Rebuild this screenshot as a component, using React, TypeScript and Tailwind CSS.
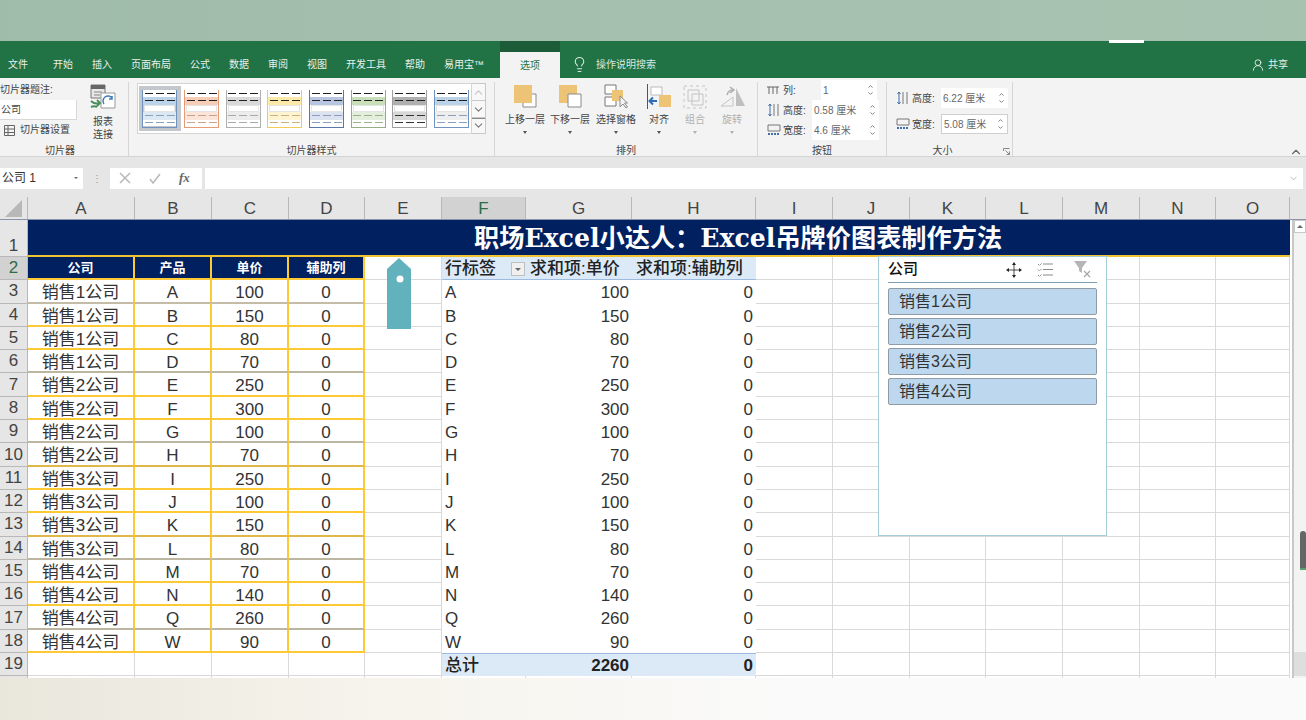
import type { ReactNode } from 'react'
import { ChevronDown, ChevronUp, Lightbulb, UserRound } from 'lucide-react'

const gridCols =
  'grid grid-rows-[minmax(0,1fr)] grid-cols-[28px_107px_77px_77px_76px_77px_84px_106px_124px_77px_77px_76px_77px_77px_76px_74px]'

const tabs = ['开始', '插入', '页面布局', '公式', '数据', '审阅', '视图', '开发工具', '帮助', '易用宝™']
const colNames = ['A', 'B', 'C', 'D', 'E', 'F', 'G', 'H', 'I', 'J', 'K', 'L', 'M', 'N', 'O']

const rows = [
  { no: 3, company: '销售1公司', product: 'A', price: 100, line: 'border-b-[#c4bca6]' },
  { no: 4, company: '销售1公司', product: 'B', price: 150, line: 'border-b-[#fdc935]' },
  { no: 5, company: '销售1公司', product: 'C', price: 80, line: 'border-b-[#fdc935]' },
  { no: 6, company: '销售1公司', product: 'D', price: 70, line: 'border-b-[#bcb5a0]' },
  { no: 7, company: '销售2公司', product: 'E', price: 250, line: 'border-b-[#fdc935]' },
  { no: 8, company: '销售2公司', product: 'F', price: 300, line: 'border-b-[#fdc935]' },
  { no: 9, company: '销售2公司', product: 'G', price: 100, line: 'border-b-[#bcb5a0]' },
  { no: 10, company: '销售2公司', product: 'H', price: 70, line: 'border-b-[#e0b84a]' },
  { no: 11, company: '销售3公司', product: 'I', price: 250, line: 'border-b-[#fdc935]' },
  { no: 12, company: '销售3公司', product: 'J', price: 100, line: 'border-b-[#fdc935]' },
  { no: 13, company: '销售3公司', product: 'K', price: 150, line: 'border-b-[#e0b84a]' },
  { no: 14, company: '销售3公司', product: 'L', price: 80, line: 'border-b-[#bcb5a0]' },
  { no: 15, company: '销售4公司', product: 'M', price: 70, line: 'border-b-[#fdc935]' },
  { no: 16, company: '销售4公司', product: 'N', price: 140, line: 'border-b-[#fdc935]' },
  { no: 17, company: '销售4公司', product: 'Q', price: 260, line: 'border-b-[#bcb5a0]' },
  { no: 18, company: '销售4公司', product: 'W', price: 90, line: 'border-b-[#fdc935]' },
]

const swatches = [
  { edge: 'border-[#6f93bd]', band: 'bg-[#bdd3ea]', soft: 'bg-[#dce8f4]', dash: 'border-[#8aa0b8]' },
  { edge: 'border-[#e59c74]', band: 'bg-[#f6cdb6]', soft: 'bg-[#fbe4d8]', dash: 'border-[#c9a08a]' },
  { edge: 'border-[#b0b0b0]', band: 'bg-[#d9d9d9]', soft: 'bg-[#ececec]', dash: 'border-[#a8a8a8]' },
  { edge: 'border-[#f4cb58]', band: 'bg-[#fde9a8]', soft: 'bg-[#fef4d2]', dash: 'border-[#c8b478]' },
  { edge: 'border-[#5877a8]', band: 'bg-[#b7c5e0]', soft: 'bg-[#dbe2f0]', dash: 'border-[#8b9cbc]' },
  { edge: 'border-[#93ad84]', band: 'bg-[#c8dfba]', soft: 'bg-[#e3efdc]', dash: 'border-[#9cb08e]' },
  { edge: 'border-[#a0a0a0]', band: 'bg-[#b0b0b0]', soft: 'bg-[#d8d8d8]', dash: 'border-[#333333]' },
  { edge: 'border-[#6f93bd]', band: 'bg-[#bcd2e8]', soft: 'bg-[#eeeeee]', dash: 'border-[#8aa0b8]' },
]

function Dashes({ color }: { color: string }) {
  return (
    <div className="flex w-full justify-center gap-[3px]">
      <span className={`w-[8px] border-t ${color}`} />
      <span className={`w-[8px] border-t ${color}`} />
      <span className={`w-[8px] border-t ${color}`} />
    </div>
  )
}

function Swatch({ s, selected }: { s: (typeof swatches)[number]; selected?: boolean }) {
  return (
    <div className={`flex h-[45px] w-[41.7px] shrink-0 items-center justify-center ${selected ? 'bg-[#c4c7cb]' : ''}`}>
      <div className={`flex h-[38px] w-[35px] flex-col border-x border-b ${s.edge}`}>
        <div className="flex h-[7px] items-center bg-white"><Dashes color="border-[#222222]" /></div>
        <div className={`flex h-[8px] items-center ${s.band}`}><Dashes color="border-[#222222]" /></div>
        <div className="mx-[1px] h-[7px] border border-[#e4e4e4] bg-white" />
        <div className={`flex h-[8px] items-center ${s.soft}`}><Dashes color={s.dash} /></div>
        <div className="flex h-[6px] items-center bg-white"><Dashes color={s.dash} /></div>
      </div>
    </div>
  )
}

function Group({ label, width, labelPad = '', children }: { label: string; width: string; labelPad?: string; children: ReactNode }) {
  return (
    <div className={`relative flex h-full shrink-0 flex-col border-r border-[#d6d6d6] ${width}`}>
      <div className="flex min-h-0 flex-1">{children}</div>
      <div className={`-mb-[2px] text-center text-[10px] leading-[14px] text-[#444444] ${labelPad}`}>{label}</div>
    </div>
  )
}

function Spinner({ value, width }: { value: string; width: string }) {
  return (
    <div className={`flex h-[20px] items-center justify-between bg-white pl-[2px] pr-[3px] text-[10px] text-[#666666] ${width}`}>
      <span>{value}</span>
      <span className="flex flex-col text-[#555555]">
        <ChevronUp size={7} strokeWidth={2.5} />
        <ChevronDown size={7} strokeWidth={2.5} />
      </span>
    </div>
  )
}

function HeightIcon() {
  return (
    <svg width="13" height="14" viewBox="0 0 13 14" fill="none">
      <path d="M3 1v12M1.500 3 3 1l1.500 2M1.500 11 3 13l1.500-2" stroke="#3f6fa8" />
      <path d="M7 1v12M11 1v12" stroke="#777777" />
    </svg>
  )
}

function WidthIcon() {
  return (
    <svg width="14" height="13" viewBox="0 0 14 13" fill="none">
      <path d="M1 1h12M1 7h12M1 1v6M13 1v6" stroke="#777777" />
      <path d="M1 10h12" stroke="#3f6fa8" strokeDasharray="2 1" strokeWidth="2" />
    </svg>
  )
}

function Arrange({ label, width, muted, children }: { label: string; width: string; muted?: boolean; children: ReactNode }) {
  return (
    <div className={`flex shrink-0 flex-col items-center ${width}`}>
      <div className="h-[26px]">{children}</div>
      <div className={`mt-[3px] whitespace-nowrap text-[10px] leading-[14px] ${muted ? 'text-[#b0b0b0]' : 'text-[#444444]'}`}>{label}</div>
      <div className={`mt-[4px] h-0 w-0 border-x-[2.500px] border-t-[3px] border-x-transparent ${muted ? 'border-t-[#b0b0b0]' : 'border-t-[#555555]'}`} />
    </div>
  )
}

function Ribbon() {
  return (
    <div className="flex h-[79px] shrink-0 border-b border-[#d4d4d4] bg-[#f3f3f3] pt-[4px] text-[#444444]">
      <Group label="切片器" width="w-[129px]" labelPad="pr-[8px]">
        <div className="w-[88px] pt-[1px]">
          <div className="text-[10px] leading-[14px]">切片器题注:</div>
          <div className="mt-[3px] flex h-[20px] w-[77px] items-center border-b border-r border-[#d8d8d8] bg-white pl-[1px] text-[10px]">公司</div>
          <div className="mt-[3px] flex items-center gap-[5px] pl-[4px] text-[10px] leading-[14px]">
            <svg width="11" height="11" viewBox="0 0 11 11" fill="none" stroke="#666666">
              <path d="M.5.5h10v10H.5zM.5 4h10M.5 7.500h10M4 .5v10" />
            </svg>
            切片器设置
          </div>
        </div>
        <div className="flex w-[30px] flex-col items-center pt-[2px]">
          <svg width="26" height="26" viewBox="0 0 26 26" fill="none">
            <path d="M1 1h14v13H1z" fill="#e8e8e8" stroke="#777777" />
            <path d="M1 1h14v4H1z" fill="#666666" />
            <path d="M4 8h8M4 11h6" stroke="#888888" />
            <path d="M11 9h14v15H11z" fill="#ffffff" stroke="#999999" />
            <path d="M14 20a5 5 0 0 1 8-6M22 12v3h-3" stroke="#3f7cb8" strokeWidth="1.500" />
            <path d="M1 17c3 3 6 3 9 2M7 16l3 3-3 3M1 23c2-1 4-1 6 0" stroke="#4e8f5e" strokeWidth="2" />
          </svg>
          <div className="mt-[5px] text-center text-[10px] leading-[13px]">报表<br />连接</div>
        </div>
      </Group>

      <Group label="切片器样式" width="w-[366px]">
        <div className="flex pl-[8px] pt-[1px]">
          <div className="flex h-[51px] w-[335px] items-center overflow-hidden border border-[#d4d4d4] bg-white pl-[1px]">
            {swatches.map((s, i) => (
              <Swatch key={i} s={s} selected={i === 0} />
            ))}
          </div>
          <div className="flex h-[51px] w-[14px] flex-col border-y border-r border-[#c8c8c8] bg-[#f8f8f8] text-[#777777]">
            <div className="flex h-[17px] items-center justify-center border-b border-[#c8c8c8] text-[#c4c4c4]"><ChevronUp size={13} /></div>
            <div className="flex h-[17px] items-center justify-center border-b border-[#c8c8c8]"><ChevronDown size={13} /></div>
            <div className="flex flex-1 items-start justify-center border-t border-[#888888]"><ChevronDown size={13} /></div>
          </div>
        </div>
      </Group>

      <Group label="排列" width="w-[263px]">
        <div className="flex pl-[8px] pt-[2px]">
          <Arrange label="上移一层" width="w-[44px]">
            <svg width="24" height="26" viewBox="0 0 24 26" fill="none">
              <path d="M10 10h13v13H10z" fill="#ffffff" stroke="#8a8a8a" />
              <path d="M1 1h18v18H1z" fill="#edc476" />
            </svg>
          </Arrange>
          <Arrange label="下移一层" width="w-[46px]">
            <svg width="24" height="26" viewBox="0 0 24 26" fill="none">
              <path d="M1 1h18v18H1z" fill="#edc476" />
              <path d="M10 10h13v13H10z" fill="#ffffff" stroke="#8a8a8a" />
            </svg>
          </Arrange>
          <Arrange label="选择窗格" width="w-[46px]">
            <svg width="24" height="26" viewBox="0 0 24 26" fill="none">
              <path d="M1 1h11v9H1zM1 13h11v9H1z" fill="#ffffff" stroke="#777777" />
              <path d="M8 6h11v11H8z" fill="#edc476" />
              <path d="M16 12v11l3-3 3 4 1.500-1-3-4h3z" fill="#f3f3f3" stroke="#8a8a8a" />
            </svg>
          </Arrange>
          <Arrange label="对齐" width="w-[40px]">
            <svg width="26" height="26" viewBox="0 0 26 26" fill="none">
              <path d="M1.500 0v25" stroke="#555555" />
              <path d="M5 3h11v8H5z" fill="#ffffff" stroke="#bbbbbb" />
              <path d="M13 11h12v12H13z" fill="#edc476" />
              <path d="M11 17H4M7 13.500 3.500 17 7 20.500" stroke="#2f6db0" strokeWidth="2" />
            </svg>
          </Arrange>
          <Arrange label="组合" width="w-[32px]" muted>
            <svg width="26" height="26" viewBox="0 0 26 26" fill="none" stroke="#c4c4c4">
              <path d="M2 2h22v22H2z" strokeDasharray="3 3" />
              <path d="M6 6h11v11H6zM10 10h11v11H10z" />
            </svg>
          </Arrange>
          <Arrange label="旋转" width="w-[42px]" muted>
            <svg width="26" height="26" viewBox="0 0 26 26" fill="none">
              <path d="M17 4 26 22H17z" fill="#c0c0c0" />
              <path d="M2 22 14 13v9z" stroke="#c4c4c4" />
              <path d="M8 11c1-4 3-5 6-5M11 3l4 3-4 3" stroke="#b0b0b0" strokeWidth="1.500" />
            </svg>
          </Arrange>
        </div>
      </Group>

      <Group label="按钮" width="w-[129px]">
        <div className="-mt-[2px] flex w-full flex-col pl-[9px] text-[10px]">
          <div className="flex h-[20px] items-center">
            <svg width="12" height="10" viewBox="0 0 12 10" fill="none" stroke="#666666">
              <path d="M0 2h12M2 2v7M6 2v7M10 2v7" />
            </svg>
            <span className="ml-[4px] w-[38px]">列:</span>
            <Spinner value="1" width="w-[56px]" />
          </div>
          <div className="flex h-[20px] items-center">
            <HeightIcon />
            <span className="ml-[3px] w-[29px]">高度:</span>
            <Spinner value="0.58 厘米" width="w-[67px]" />
          </div>
          <div className="flex h-[20px] items-center">
            <WidthIcon />
            <span className="ml-[2px] w-[29px]">宽度:</span>
            <Spinner value="4.6 厘米" width="w-[67px]" />
          </div>
        </div>
      </Group>

      <Group label="大小" width="w-[126px]" labelPad="pr-[14px]">
        <div className="flex w-full flex-col gap-[6px] pl-[9px] pt-[6px] text-[10px]">
          <div className="flex items-center">
            <HeightIcon />
            <span className="ml-[3px] w-[29px]">高度:</span>
            <Spinner value="6.22 厘米" width="w-[67px]" />
          </div>
          <div className="flex items-center">
            <WidthIcon />
            <span className="ml-[2px] w-[29px]">宽度:</span>
            <Spinner value="5.08 厘米" width="w-[67px] border border-[#d0d0d0]" />
          </div>
        </div>
        <svg className="absolute bottom-[1px] right-[2px]" width="7" height="7" viewBox="0 0 7 7" fill="none" stroke="#888888">
          <path d="M.5 3V.5H6.500M2.500 2.500l4 4M6.500 3.500v3h-3" />
        </svg>
      </Group>

      <div className="flex flex-1 items-end justify-end pr-[3px] text-[#666666]">
        <ChevronUp size={14} className="-mb-[3px]" />
      </div>
    </div>
  )
}

function Tabs() {
  return (
    <div className="relative flex h-[37px] shrink-0 bg-[#217346] text-[10px] text-[#e8f1eb]">
      <div className="flex items-end pb-[6px] pl-[8px]">
        <span className="mr-[25px] leading-[14px]">文件</span>
        <div className="flex gap-[19px]">
          {tabs.map((t) => (
            <span key={t} className="whitespace-nowrap leading-[14px]">{t}</span>
          ))}
        </div>
      </div>
      <div className="ml-[16px] flex flex-col">
        <div className="h-[11px] w-[60px] bg-[#1c5c39]" />
        <div className="flex h-[26px] w-[60px] items-center justify-center bg-[#f3f3f3] text-[#217346]">选项</div>
      </div>
      <div className="ml-[11px] flex items-end gap-[8px] pb-[5px] text-[#d9e8df]">
        <Lightbulb size={17} strokeWidth={1.500} />
        <span className="mb-[1px] leading-[14px]">操作说明搜索</span>
      </div>
      <div className="flex flex-1 items-end justify-end gap-[3px] pb-[6px] pr-[18px]">
        <UserRound size={14} strokeWidth={1.500} />
        <span className="leading-[14px]">共享</span>
      </div>
      <div className="absolute left-[1109px] top-[-1px] h-[3px] w-[35px] bg-white" />
    </div>
  )
}

function FormulaBar() {
  return (
    <div className="flex h-[40px] shrink-0 items-center bg-[#e6e6e6] pt-[2px] text-[#555555]">
      <div className="flex h-[21px] w-[83px] items-center justify-between bg-white pl-[2px] pr-[5px] text-[12px] text-[#333333]">
        <span>公司 1</span>
        <span className="h-0 w-0 border-x-[2px] border-t-[2.500px] border-x-transparent border-t-[#666666]" />
      </div>
      <span className="w-[27px] text-center text-[10px] tracking-tighter text-[#999999]">⋮</span>
      <div className="flex h-[21px] w-[92px] items-center gap-[18px] bg-white pl-[9px] text-[#b8b8b8]">
        <svg width="12" height="12" viewBox="0 0 12 12" stroke="currentColor" strokeWidth="1.500"><path d="m1 1 10 10M11 1 1 11" /></svg>
        <svg width="12" height="12" viewBox="0 0 12 12" fill="none" stroke="currentColor" strokeWidth="1.500"><path d="m1 7 3 4 7-9" /></svg>
        <span className="font-['Liberation_Serif',serif] text-[13px] font-bold italic text-[#666666]">fx</span>
      </div>
      <div className="ml-[3px] flex h-[21px] w-[1098px] items-center justify-end bg-white pr-[4px] text-[#b5b5b5]">
        <ChevronDown size={11} />
      </div>
    </div>
  )
}

function ColumnHeader() {
  return (
    <div className={`${gridCols} h-[23px] shrink-0 border-b border-[#8a93a8] bg-[#e6e6e6] text-[17px] leading-[23px] text-[#444444]`}>
      <div className="flex items-center justify-center border-r border-[#b8b8b8]">
        <svg width="18" height="17" viewBox="0 0 18 17"><path d="M17 0v17H0z" fill="#b8b8b8" /></svg>
      </div>
      {colNames.map((c) => (
        <div key={c} className={`border-r border-[#b8b8b8] text-center ${c === 'F' ? 'bg-[#d2d2d2] text-[#2f6b47]' : ''}`}>{c}</div>
      ))}
    </div>
  )
}

function RowHead({ n, active }: { n: number; active?: boolean }) {
  return (
    <div className={`flex justify-center border-b border-r border-[#b8b8b8] text-[17px] ${n === 1 ? 'items-end leading-[20px]' : 'items-center leading-[24px]'} ${active ? 'bg-[#d2d2d2] text-[#2f6b47]' : 'bg-[#e6e6e6] text-[#444444]'}`}>{n}</div>
  )
}

function Blank() {
  return <div className="border-b border-r border-[#d9d9d9]" />
}

function Blanks() {
  return (
    <>
      <Blank /><Blank /><Blank /><Blank /><Blank /><Blank /><Blank />
    </>
  )
}

function Sheet() {
  return (
    <div className="relative flex min-h-0 flex-1 overflow-hidden bg-white text-[17px] text-[#333333]">
      <div className="min-w-0 flex-1">
        <div className={`${gridCols} h-[37px]`}>
          <RowHead n={1} />
          <div className="col-span-15 flex items-end justify-start border-b-2 border-[#f2c230] bg-[#012060] pb-[1px] pl-[446px] font-['DejaVu_Serif','Noto_Sans_CJK_SC',serif] text-[25.200px] font-bold leading-[32px] text-white">
            <span className="whitespace-nowrap">职场Excel小达人：Excel吊牌价图表制作方法</span>
          </div>
        </div>

        <div className={`${gridCols} h-[23.300px]`}>
          <RowHead n={2} active />
          {['公司', '产品', '单价', '辅助列'].map((h) => (
            <div key={h} className="flex items-center justify-center border-b-2 border-r-2 border-[#fdc935] bg-[#012060] pt-[1px] text-[13px] font-bold text-white">{h}</div>
          ))}
          <Blank />
          <div className="relative flex items-center border-b border-[#9dbbdf] bg-[#dce9f6] pl-[3px] pt-[2px] font-medium text-[#222222]">
            行标签
            <span className="absolute bottom-[3px] right-[1px] flex h-[14px] w-[14px] items-center justify-center border border-[#c0c0c0] bg-[#f0f0f0] text-[#666666]">
              <span className="h-0 w-0 border-x-[3px] border-t-[3px] border-x-transparent border-t-[#666666]" />
            </span>
          </div>
          <div className="flex items-center whitespace-nowrap border-b border-[#9dbbdf] bg-[#dce9f6] pl-[4px] pt-[2px] font-medium text-[#222222]">求和项:单价</div>
          <div className="flex items-center whitespace-nowrap border-b border-[#9dbbdf] bg-[#dce9f6] pl-[4px] pt-[2px] font-medium text-[#222222]">求和项:辅助列</div>
          <Blanks />
        </div>

        {rows.map((r) => (
          <div key={r.no} className={`${gridCols} h-[23.300px] leading-[25px]`}>
            <RowHead n={r.no} />
            <div className={`border-b-2 border-r-2 border-r-[#fdc935] text-center ${r.line}`}>{r.company}</div>
            <div className={`border-b-2 border-r-2 border-r-[#fdc935] text-center ${r.line}`}>{r.product}</div>
            <div className={`border-b-2 border-r-2 border-r-[#fdc935] text-center ${r.line}`}>{r.price}</div>
            <div className={`border-b-2 border-r-2 border-r-[#fdc935] text-center ${r.line}`}>0</div>
            <Blank />
            <div className="pl-[3px]">{r.product}</div>
            <div className="pr-[3px] text-right">{r.price}</div>
            <div className="pr-[3px] text-right">0</div>
            <Blanks />
          </div>
        ))}

        <div className={`${gridCols} h-[23.300px] leading-[23px]`}>
          <RowHead n={19} />
          <Blank /><Blank /><Blank /><Blank /><Blank />
          <div className="border-t border-[#9dbbdf] bg-[#dce9f6] pl-[3px] font-medium text-[#222222]">总计</div>
          <div className="border-t border-[#9dbbdf] bg-[#dce9f6] pr-[3px] text-right font-bold text-[#222222]">2260</div>
          <div className="border-t border-[#9dbbdf] bg-[#dce9f6] pr-[3px] text-right font-bold text-[#222222]">0</div>
          <Blanks />
        </div>

        <div className={`${gridCols} h-[3px]`}>
          <div className="border-r border-[#b8b8b8] bg-[#e6e6e6]" />
          <Blank /><Blank /><Blank /><Blank /><Blank /><Blank /><Blank /><Blank /><Blanks />
        </div>
      </div>

      {/* right scroll bar */}
      <div className="relative flex w-[14px] shrink-0 flex-col border-l-2 border-[#c8c8c8] bg-[#f3f3f3]">
        <div className="flex h-[13px] items-center justify-center border border-[#c8c8c8] bg-white">
          <span className="h-0 w-0 border-x-[3px] border-b-[3px] border-x-transparent border-b-[#666666]" />
        </div>
        <div className="absolute left-[6px] top-[311px] h-[39px] w-[6px] rounded-t-sm border-b-2 border-[#5aa06e] bg-[#666666]" />
        <div className="absolute bottom-[2px] left-0 h-[24px] w-[12px] bg-[#dedede]" />
      </div>

      {/* tag shape */}
      <svg className="absolute left-[387px] top-[38px]" width="24" height="71" viewBox="0 0 24 71">
        <path d="M12 0 24 11v60H0V11z" fill="#62b2bd" />
        <circle cx="13" cy="21" r="3.500" fill="#ffffff" />
      </svg>

      {/* slicer */}
      <div className="absolute left-[878px] top-[36px] flex h-[280px] w-[229px] flex-col border border-[#a5cdd8] bg-white px-[9px]">
        <div className="flex h-[26px] shrink-0 items-center border-b border-[#7fa0b5] text-[15px] font-medium text-[#111111]">
          <span>公司</span>
          <svg className="ml-[88px]" width="16" height="16" viewBox="0 0 16 16" fill="#222222" stroke="#222222">
            <path d="M8 2v12M2 8h12" strokeWidth=".8" />
            <path d="M8 0 6 3h4zM8 16l-2-3h4zM0 8l3-2v4zM16 8l-3-2v4z" stroke="none" />
          </svg>
          <svg className="ml-[15px]" width="16" height="15" viewBox="0 0 16 15" fill="none" stroke="#8a8a8a">
            <path d="M6 2h10M6 7.500h10M6 13h10" />
            <path d="m1 2 1.500 1.500L5 1M1 7.500 2.500 9 5 6.500M1 13l1.500 1.500L5 12" strokeDasharray="2 1" />
          </svg>
          <svg className="ml-[21px]" width="18" height="17" viewBox="0 0 18 17">
            <path d="M0 0h13L8 7v5L5 10V7z" fill="#b5b5b5" />
            <path d="m10 10 6 6M16 10l-6 6" stroke="#a8a8a8" strokeWidth="1.300" fill="none" />
          </svg>
        </div>
        <div className="mt-[5px] flex flex-col gap-[3px]">
          {['销售1公司', '销售2公司', '销售3公司', '销售4公司'].map((c) => (
            <div key={c} className="flex h-[27px] items-center rounded-[2px] border border-[#8f9ca8] bg-[#bdd7ee] pl-[10px] text-[16px] text-[#333333]">{c}</div>
          ))}
        </div>
      </div>
    </div>
  )
}

export default function App() {
  return (
    <div className="flex h-[720px] w-[1306px] flex-col overflow-hidden bg-white font-['Liberation_Sans','Noto_Sans_CJK_SC',sans-serif]">
      <div className="h-[41px] shrink-0 bg-gradient-to-r from-[#9fbba9] via-[#a6c0af] to-[#a8c2b0]" />
      <Tabs />
      <Ribbon />
      <FormulaBar />
      <ColumnHeader />
      <Sheet />
      <div className="h-[42px] shrink-0 bg-gradient-to-r from-[#e9e7dc] via-[#f6f4ec] via-30% to-[#fafafa] to-60%" />
    </div>
  )
}
